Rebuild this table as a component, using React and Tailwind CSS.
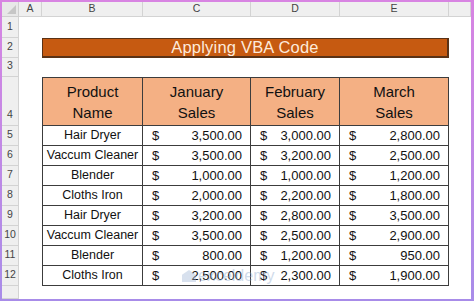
import React from "react";

const rows = [
  ["Hair Dryer", "3,500.00", "3,000.00", "2,800.00"],
  ["Vaccum Cleaner", "3,500.00", "3,200.00", "2,500.00"],
  ["Blender", "1,000.00", "1,000.00", "1,200.00"],
  ["Cloths Iron", "2,000.00", "2,200.00", "1,800.00"],
  ["Hair Dryer", "3,200.00", "2,800.00", "3,500.00"],
  ["Vaccum Cleaner", "3,500.00", "2,500.00", "2,900.00"],
  ["Blender", "800.00", "1,200.00", "950.00"],
  ["Cloths Iron", "2,500.00", "2,300.00", "1,900.00"],
];

const cols = ["A", "B", "C", "D", "E", ""];
const rowNums = ["1", "2", "3", "4", "5", "6", "7", "8", "9", "10", "11", "12", ""];

function Money({ v }) {
  return (
    <div className="flex items-center justify-between border-r border-b border-[#3c3c3c] pl-[9px] pr-[8px] text-[13px] text-[#111]">
      <span>$</span>
      <span>{v}</span>
    </div>
  );
}

export default function App() {
  return (
    <div
      className="w-[474px] h-[301px] bg-gradient-to-b from-[#d884e2] to-[#a88ce9] pt-[2px] pl-[2px] pr-[3px] pb-[2px]"
      style={{ fontFamily: '"Liberation Sans", Arial, sans-serif' }}
    >
      <div className="relative grid h-[297px] w-[469px] bg-white grid-cols-[17px_23px_101px_108px_89px_109px_22px] grid-rows-[15px_21px_20px_19px_49px_20px_20px_20px_20px_20px_20px_20px_20px_13px]">
        {/* corner */}
        <div className="relative col-start-1 row-start-1 bg-[#e8e8e8] border-r border-b border-[#cfcfcf]">
          <div className="absolute right-[2px] bottom-[2px] w-0 h-0 border-l-[9px] border-l-transparent border-b-[9px] border-b-[#c6c6c6]" />
        </div>
        {/* column headers */}
        {cols.map((c, i) => (
          <div
            key={"c" + i}
            className="row-start-1 flex items-center justify-center bg-[#efefef] border-r border-b border-[#d3d3d3] text-[10.5px] text-[#444]"
            style={{ gridColumnStart: i + 2 }}
          >
            {c}
          </div>
        ))}
        {/* row headers */}
        {rowNums.map((r, i) => (
          <div
            key={"r" + i}
            className="col-start-1 flex items-end justify-center pb-[2px] bg-[#efefef] border-r border-b border-[#d3d3d3] text-[10.5px] text-[#444]"
            style={{ gridRowStart: i + 2 }}
          >
            {r}
          </div>
        ))}

        {/* title */}
        <div className="col-start-3 col-span-4 row-start-3 flex items-center justify-center bg-[#c65a11] border border-[#5a3216] border-b-[2px] border-r-[2px] text-[16.5px] text-[#fdeadb] tracking-[0.2px]">
          Applying VBA Code
        </div>

        {/* table */}
        <div className="col-start-3 col-span-4 row-start-5 row-span-9 grid grid-cols-[101px_108px_89px_109px] grid-rows-[49px_20px_20px_20px_20px_20px_20px_20px_20px]">
          {[
            ["Product", "Name"],
            ["January", "Sales"],
            ["February", "Sales"],
            ["March", "Sales"],
          ].map((h, i) => (
            <div
              key={"h" + i}
              className={
                "flex flex-col items-center justify-center bg-[#f4b084] border-t border-r border-b border-[#3c3c3c] text-[15px] leading-[21px] text-[#111] " +
                (i === 0 ? "border-l" : "")
              }
            >
              <span>{h[0]}</span>
              <span>{h[1]}</span>
            </div>
          ))}
          {rows.map((r, i) => (
            <React.Fragment key={"d" + i}>
              <div className="flex items-center justify-center border-l border-r border-b border-[#3c3c3c] text-[12.5px] text-[#111]">
                {r[0]}
              </div>
              <Money v={r[1]} />
              <Money v={r[2]} />
              <Money v={r[3]} />
            </React.Fragment>
          ))}
        </div>

        {/* watermark */}
        <div className="pointer-events-none absolute left-[180px] top-[266px] flex items-center gap-[2px] opacity-40">
          <div className="w-[14px] h-[12px] bg-[#9fb6d6] [clip-path:polygon(50%_0,100%_40%,100%_100%,0_100%,0_40%)]" />
          <span className="text-[16px] text-[#8aa6cc] leading-none">exceldemy</span>
        </div>
      </div>
    </div>
  );
}
